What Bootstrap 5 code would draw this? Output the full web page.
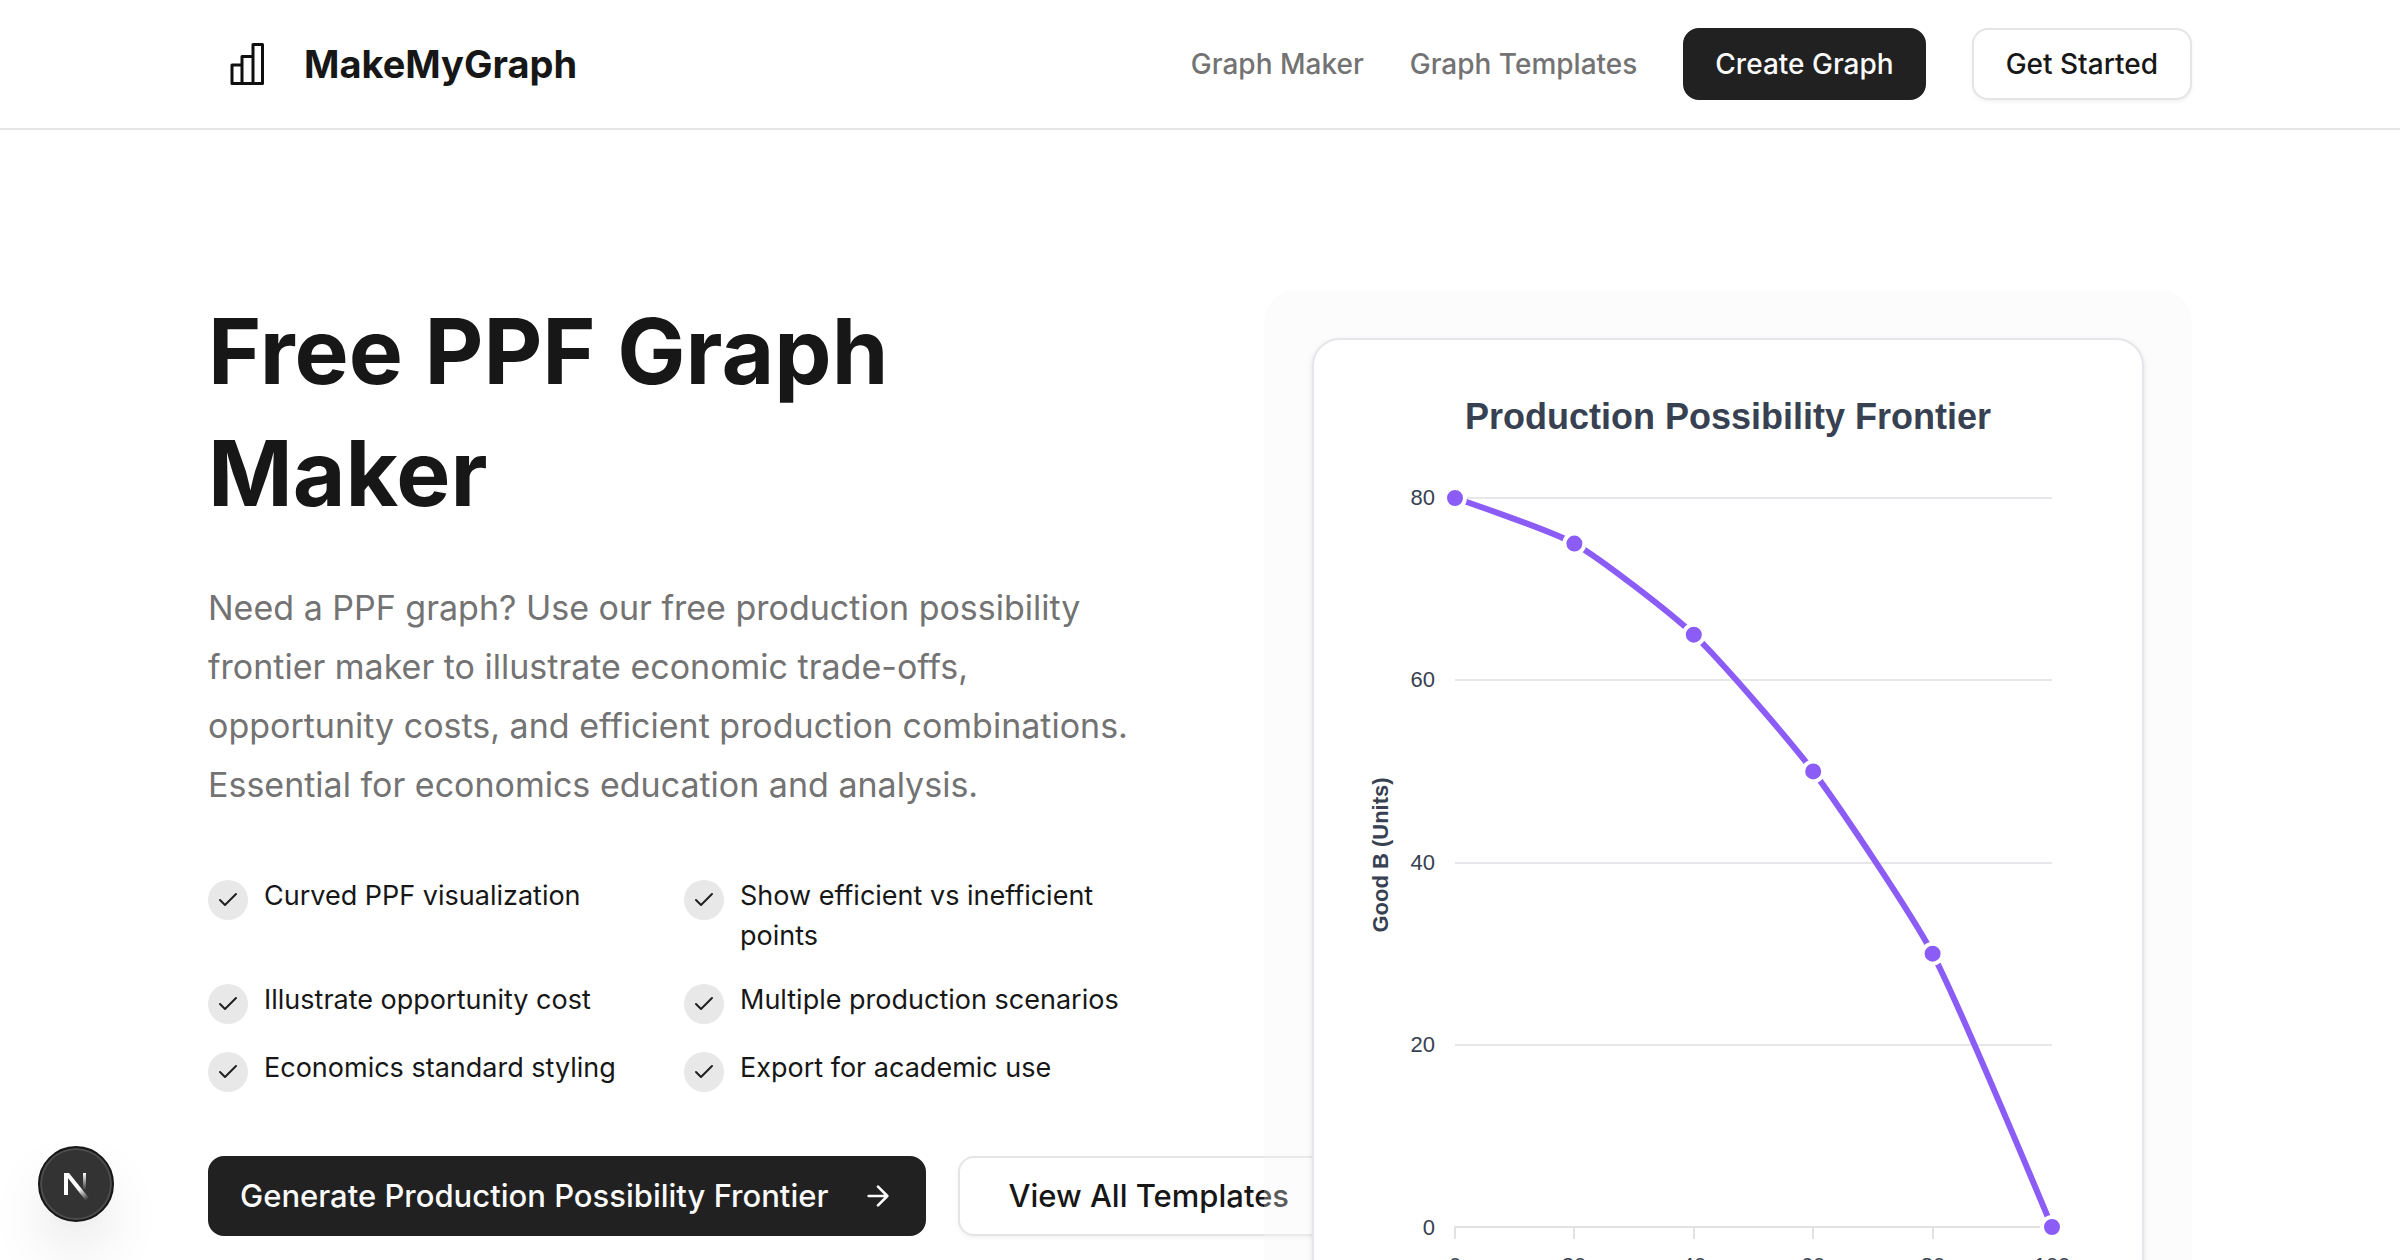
<!DOCTYPE html>
<html lang="en">
<head>
<meta charset="utf-8">
<meta name="viewport" content="width=device-width, initial-scale=1">
<title>Free PPF Graph Maker - MakeMyGraph</title>
<link href="https://cdn.jsdelivr.net/npm/bootstrap@5.3.0/dist/css/bootstrap.min.css" rel="stylesheet">
<style>
  body { font-family: Inter, "Noto Sans", sans-serif; font-size: 28px; line-height: 40px; color: #171717; background: #fff; }
  .shell { padding: 0 208px; }
  .site-nav { border-bottom: 2px solid #e5e5e5; padding-top: 28px; padding-bottom: 28px; }
  .brand-icon { width: 80px; height: 56px; }
  .brand-name { font-size: 38px; font-weight: 700; line-height: 56px; margin-left: 16px; }
  .nav-links { gap: 46px; }
  .nav-links .text-link { color: #737373; font-weight: 500; text-decoration: none; }
  .btn { --bs-btn-font-weight: 500; --bs-btn-border-radius: 16px; --bs-btn-border-width: 2px; font-size: 28px; line-height: 40px; padding: 14px 30px; white-space: nowrap; }
  .btn-ink { --bs-btn-bg: #212121; --bs-btn-border-color: #212121; --bs-btn-color: #fafafa; --bs-btn-hover-bg: #333; --bs-btn-hover-color: #fafafa; }
  .btn-line { --bs-btn-bg: #fff; --bs-btn-border-color: #e5e5e5; --bs-btn-color: #171717; --bs-btn-hover-bg: #f5f5f5; --bs-btn-hover-border-color: #e5e5e5; padding-left: 32px; padding-right: 32px; box-shadow: 0 2px 4px rgba(0,0,0,.05); }
  .btn-big { font-size: 31px; line-height: 48px; }
  .btn-big.btn-line { padding-left: 48px; padding-right: 48px; }
  .btn-big svg { width: 32px; height: 32px; margin-left: 34px; }
  .hero { display: grid; grid-template-columns: minmax(0, 1fr) minmax(0, 1fr); gap: 128px; padding-top: 160px; }
  .hero h1 { font-size: 91px; line-height: 122px; font-weight: 700; margin: 0 0 44px; }
  .intro { font-size: 34px; line-height: 59px; color: #737373; margin: 0 0 62px; }
  .features { display: grid; grid-template-columns: 1fr 1fr; gap: 24px; margin: 0 0 64px; font-size: 27px; }
  .features li { display: flex; gap: 16px; align-items: flex-start; }
  .tick { flex: none; width: 40px; height: 40px; margin-top: 4px; border-radius: 50%; background: #e8e8e8; display: flex; align-items: center; justify-content: center; }
  .tick svg { width: 24px; height: 24px; }
  .actions { gap: 32px; }
  .preview { position: relative; background: rgba(245,245,245,.3); border-radius: 32px; padding: 48px; }
  .chart-box { background: #fff; border: 2px solid #e5e7eb; border-radius: 28px; box-shadow: 0 2px 6px rgba(0,0,0,.08), 0 2px 4px rgba(0,0,0,.04); }
  .chart-box svg { display: block; width: 100%; height: auto; font-family: "Liberation Sans", Arial, sans-serif; }
  .dev-badge { position: fixed; left: 38px; bottom: 38px; width: 76px; height: 76px; border: 2px solid #171717; border-radius: 50%; background: #333; padding: 0; box-shadow: inset 0 0 0 2px #4c4c4c, 0 32px 64px -16px rgba(0,0,0,.24), 0 8px 16px rgba(0,0,0,.02); }
  .dev-badge svg { display: block; width: 72px; height: 72px; }
</style>
<script src="https://cdn.jsdelivr.net/npm/bootstrap@5.3.0/dist/js/bootstrap.bundle.min.js"></script>
</head>
<body class="vh-100 overflow-hidden">

<header class="site-nav shell d-flex align-items-center justify-content-between">
  <a href="#" class="d-flex align-items-center text-reset text-decoration-none">
    <svg class="brand-icon" viewBox="0 0 80 56" fill="none" stroke="#0f0f0f" stroke-width="3" stroke-linejoin="round">
      <path d="M24 29h10v18.500h-10zM34 20.500h11v27h-11zM45 8.500h9.500v39h-9.500z"/>
    </svg>
    <span class="brand-name">MakeMyGraph</span>
  </a>
  <nav class="nav-links d-flex align-items-center">
    <a href="#" class="text-link">Graph Maker</a>
    <a href="#" class="text-link">Graph Templates</a>
    <button type="button" class="btn btn-ink">Create Graph</button>
    <button type="button" class="btn btn-line">Get Started</button>
  </nav>
</header>

<main class="hero shell">
  <section>
    <h1>Free PPF Graph Maker</h1>
    <p class="intro">Need a PPF graph? Use our free production possibility frontier maker to illustrate economic trade-offs, opportunity costs, and efficient production combinations. Essential for economics education and analysis.</p>
    <ul class="features list-unstyled">
      <li><span class="tick"><svg viewBox="0 0 24 24" fill="none" stroke="#212121" stroke-width="2" stroke-linecap="round" stroke-linejoin="round"><path d="M20 6 9 17l-5-5"/></svg></span><span>Curved PPF visualization</span></li>
      <li><span class="tick"><svg viewBox="0 0 24 24" fill="none" stroke="#212121" stroke-width="2" stroke-linecap="round" stroke-linejoin="round"><path d="M20 6 9 17l-5-5"/></svg></span><span>Show efficient vs inefficient points</span></li>
      <li><span class="tick"><svg viewBox="0 0 24 24" fill="none" stroke="#212121" stroke-width="2" stroke-linecap="round" stroke-linejoin="round"><path d="M20 6 9 17l-5-5"/></svg></span><span>Illustrate opportunity cost</span></li>
      <li><span class="tick"><svg viewBox="0 0 24 24" fill="none" stroke="#212121" stroke-width="2" stroke-linecap="round" stroke-linejoin="round"><path d="M20 6 9 17l-5-5"/></svg></span><span>Multiple production scenarios</span></li>
      <li><span class="tick"><svg viewBox="0 0 24 24" fill="none" stroke="#212121" stroke-width="2" stroke-linecap="round" stroke-linejoin="round"><path d="M20 6 9 17l-5-5"/></svg></span><span>Economics standard styling</span></li>
      <li><span class="tick"><svg viewBox="0 0 24 24" fill="none" stroke="#212121" stroke-width="2" stroke-linecap="round" stroke-linejoin="round"><path d="M20 6 9 17l-5-5"/></svg></span><span>Export for academic use</span></li>
    </ul>
    <div class="actions d-flex">
      <button type="button" class="btn btn-ink btn-big d-flex align-items-center">Generate Production Possibility Frontier<svg viewBox="0 0 24 24" fill="none" stroke="currentColor" stroke-width="2" stroke-linecap="round" stroke-linejoin="round"><path d="M5 12h14M12 5l7 7-7 7"/></svg></button>
      <button type="button" class="btn btn-line btn-big">View All Templates</button>
    </div>
  </section>

  <section class="preview">
    <div class="chart-box">
      <svg viewBox="0 0 828 1000" role="img" aria-label="Production Possibility Frontier chart">
        <text x="414" y="89" font-size="36" font-weight="700" fill="#374151" text-anchor="middle">Production Possibility Frontier</text>
        <g stroke="#e5e7eb" stroke-width="2">
          <path d="M141 158H738M141 340H738M141 523H738M141 705H738"/>
          <path d="M140 887H739M141 887v12M260 887v12M380 887v12M499 887v12M619 887v12M738 887v12" stroke="#e2e2e2"/>
        </g>
        <g font-size="22" fill="#374151" text-anchor="end">
          <text x="121" y="165">80</text><text x="121" y="347">60</text><text x="121" y="530">40</text><text x="121" y="712">20</text><text x="121" y="895">0</text>
        </g>
        <g font-size="22" fill="#374151" text-anchor="middle">
          <text x="141" y="933">0</text><text x="260" y="933">20</text><text x="380" y="933">40</text><text x="499" y="933">60</text><text x="619" y="933">80</text><text x="738" y="933">100</text>
          <text x="414" y="975" font-weight="700">Good A (Units)</text>
          <text transform="translate(74 515) rotate(-90)" font-weight="700">Good B (Units)</text>
        </g>
        <path id="curve" fill="none" stroke="#8b5cf6" stroke-width="6" stroke-linejoin="bevel"/>
        <g id="dots" fill="#8b5cf6" stroke="#fff" stroke-width="4"></g>
      </svg>
    </div>
  </section>
</main>

<button type="button" class="dev-badge" aria-label="Open developer tools">
  <svg viewBox="0 0 72 72">
    <defs>
      <linearGradient id="fadeDiag" gradientUnits="userSpaceOnUse" x1="39" y1="41" x2="47" y2="52"><stop stop-color="#fff"/><stop offset="1" stop-color="#fff" stop-opacity="0"/></linearGradient>
      <linearGradient id="fadeStem" gradientUnits="userSpaceOnUse" x1="45" y1="25" x2="45" y2="42"><stop stop-color="#fff"/><stop offset="1" stop-color="#fff" stop-opacity="0"/></linearGradient>
    </defs>
    <path d="M24 25h4v22h-4z" fill="#fff"/>
    <path d="M24 25h5l20 25-3 3-22-28z" fill="url(#fadeDiag)"/>
    <path d="M43 25h3v17h-3z" fill="url(#fadeStem)"/>
  </svg>
</button>

<script>
  // Smooth line through the data: each inner point gets handles along the
  // direction of its neighbours, kept inside the adjoining segment.
  const good = [[0, 80], [20, 75], [40, 65], [60, 50], [80, 30], [100, 0]];
  const pts = good.map(([x, y]) => [141 + x * 5.97, 887 - y * 9.1125]);
  const smooth = 0.2;
  const hypot = (a, b) => Math.hypot(b[0] - a[0], b[1] - a[1]);
  const clamp = (v, a, b) => Math.max(Math.min(a, b), Math.min(Math.max(a, b), v));
  const before = [], after = [];
  pts.forEach((p, i) => {
    if (i === 0 || i === pts.length - 1) { before[i] = after[i] = p; return; }
    const a = pts[i - 1], b = pts[i + 1], l0 = hypot(a, p), l1 = hypot(p, b);
    const r0 = smooth * l0 / (l0 + l1), r1 = smooth * l1 / (l0 + l1);
    before[i] = p.map((v, k) => clamp(v - (b[k] - a[k]) * r0, a[k], v));
    after[i] = p.map((v, k) => clamp(v + (b[k] - a[k]) * r1, v, b[k]));
  });
  let d = 'M' + pts[0];
  for (let i = 1; i < pts.length; i++) d += 'C' + after[i - 1] + ' ' + before[i] + ' ' + pts[i];
  document.getElementById('curve').setAttribute('d', d);
  document.getElementById('dots').innerHTML = pts.map(p => `<circle cx="${p[0]}" cy="${p[1]}" r="10"/>`).join('');
</script>
</body>
</html>
